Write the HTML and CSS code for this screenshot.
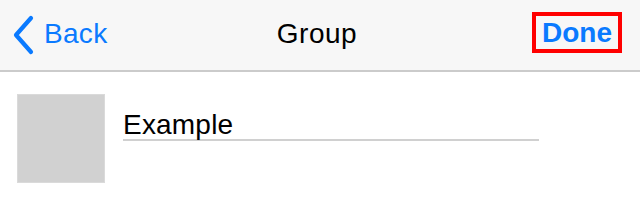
FILE: index.html
```html
<!DOCTYPE html>
<html>
<head>
<meta charset="utf-8">
<link rel="stylesheet" href="styles.css">
</head>
<body>
<header class="navbar">
  <div class="nav-left">
    <svg class="chevron" width="24" height="40" viewBox="0 0 24 40">
      <polyline points="19,3 4,20 19,37" fill="none" stroke="#0a7aff" stroke-width="4.2" stroke-linecap="round" stroke-linejoin="round"/>
    </svg>
    <span class="back">Back</span>
  </div>
  <div class="title">Group</div>
  <div class="nav-right">
    <span class="done">Done</span>
  </div>
</header>
<main class="content">
  <div class="avatar"></div>
  <div class="field">
    <div class="name">Example</div>
  </div>
</main>
</body>
</html>
```
FILE: styles.css
```css
html, body {
  margin: 0;
  padding: 0;
  background: #ffffff;
  font-family: "Liberation Sans", Arial, sans-serif;
}
.navbar {
  height: 70px;
  background: #f7f7f7;
  border-bottom: 2px solid #cbcbcb;
  display: grid;
  grid-template-columns: 1fr auto 1fr;
  align-items: center;
  padding: 0 18px 0 12px;
}
.nav-left {
  display: flex;
  align-items: center;
  color: #0a7aff;
  font-size: 28px;
  padding-bottom: 3px;
}
.chevron {
  display: block;
  margin-top: 3px;
  margin-right: 8px;
}
.back {
  line-height: 1;
  letter-spacing: 0.3px;
}
.title {
  font-size: 28px;
  color: #000;
  padding-bottom: 3px;
  line-height: 1;
  letter-spacing: 0.5px;
}
.nav-right {
  display: flex;
  justify-content: flex-end;
  padding-bottom: 5px;
}
.done {
  font-size: 28px;
  font-weight: bold;
  color: #0a7aff;
  border: 4px solid #ff0000;
  padding: 2px 6px 2px 6px;
  line-height: 29px;
  height: 29px;
  display: block;
}
.content {
  display: flex;
  align-items: flex-start;
  padding: 22px 17px 0 17px;
}
.avatar {
  width: 86px;
  height: 87px;
  background: #d1d1d1;
  border: 1px solid #dadada;
}
.field {
  margin-left: 18px;
  margin-top: 16px;
  width: 416px;
  border-bottom: 2px solid #d0d0d0;
}
.name {
  font-size: 28px;
  color: #000;
  line-height: 29px;
  letter-spacing: 0.2px;
}
```
